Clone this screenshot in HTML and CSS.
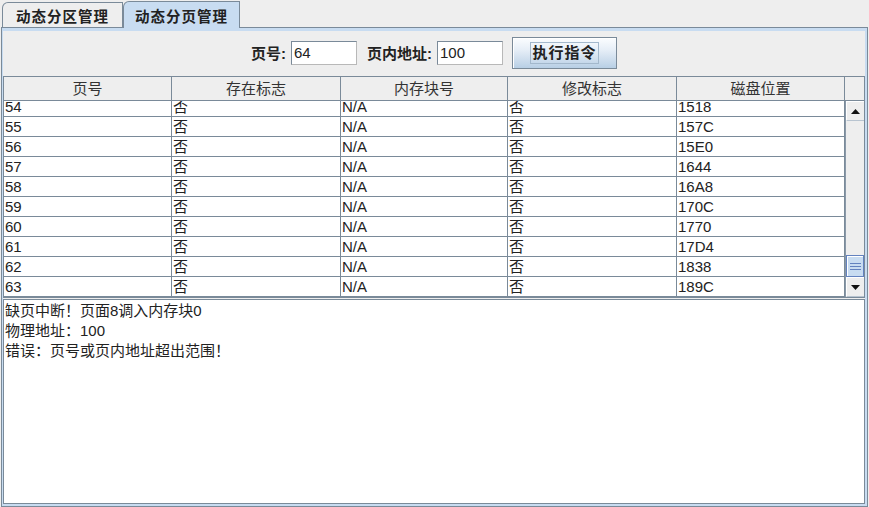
FILE: index.html
```html
<!DOCTYPE html>
<html lang="zh">
<head>
<meta charset="utf-8">
<title>动态分页管理</title>
<link rel="stylesheet" href="styles.css">
</head>
<body>
<div class="tabs">
  <div class="tab">动态分区管理</div>
  <div class="tab active">动态分页管理</div>
</div>
<div class="pane">
  <div class="pane-inner">
    <div class="toolbar">
      <span class="label">页号:</span>
      <div class="field f1">64</div>
      <span class="label">页内地址:</span>
      <div class="field f2">100</div>
      <div class="button"><span class="focus">执行指令</span></div>
    </div>
    <div class="table">
      <div class="thead">
        <div class="th c1">页号</div>
        <div class="th c2">存在标志</div>
        <div class="th c3">内存块号</div>
        <div class="th c4">修改标志</div>
        <div class="th c5">磁盘位置</div>
        <div class="th corner"></div>
      </div>
      <div class="tbody">
        <div class="rows">
          <div class="rows-inner">
            <div class="row"><div class="td c1">54</div><div class="td c2">否</div><div class="td c3">N/A</div><div class="td c4">否</div><div class="td c5">1518</div></div>
            <div class="row"><div class="td c1">55</div><div class="td c2">否</div><div class="td c3">N/A</div><div class="td c4">否</div><div class="td c5">157C</div></div>
            <div class="row"><div class="td c1">56</div><div class="td c2">否</div><div class="td c3">N/A</div><div class="td c4">否</div><div class="td c5">15E0</div></div>
            <div class="row"><div class="td c1">57</div><div class="td c2">否</div><div class="td c3">N/A</div><div class="td c4">否</div><div class="td c5">1644</div></div>
            <div class="row"><div class="td c1">58</div><div class="td c2">否</div><div class="td c3">N/A</div><div class="td c4">否</div><div class="td c5">16A8</div></div>
            <div class="row"><div class="td c1">59</div><div class="td c2">否</div><div class="td c3">N/A</div><div class="td c4">否</div><div class="td c5">170C</div></div>
            <div class="row"><div class="td c1">60</div><div class="td c2">否</div><div class="td c3">N/A</div><div class="td c4">否</div><div class="td c5">1770</div></div>
            <div class="row"><div class="td c1">61</div><div class="td c2">否</div><div class="td c3">N/A</div><div class="td c4">否</div><div class="td c5">17D4</div></div>
            <div class="row"><div class="td c1">62</div><div class="td c2">否</div><div class="td c3">N/A</div><div class="td c4">否</div><div class="td c5">1838</div></div>
            <div class="row"><div class="td c1">63</div><div class="td c2">否</div><div class="td c3">N/A</div><div class="td c4">否</div><div class="td c5">189C</div></div>
          </div>
        </div>
        <div class="vscroll">
          <div class="sbtn"><svg width="9" height="5" viewBox="0 0 9 5"><polygon points="0,5 4.5,0 9,5" fill="#111"/></svg></div>
          <div class="track"></div>
          <div class="thumb"><span></span><span></span><span></span></div>
          <div class="sbtn"><svg width="9" height="5" viewBox="0 0 9 5"><polygon points="0,0 9,0 4.5,5" fill="#111"/></svg></div>
        </div>
      </div>
    </div>
    <div class="output">
      <div class="line">缺页中断！页面8调入内存块0</div>
      <div class="line">物理地址：100</div>
      <div class="line">错误：页号或页内地址超出范围！</div>
    </div>
  </div>
</div>
</body>
</html>
```
FILE: styles.css
```css
* { box-sizing: border-box; }

body {
  margin: 0;
  width: 869px;
  height: 507px;
  overflow: hidden;
  background: #eeeeee;
  font-family: "Liberation Sans", "Noto Sans CJK SC", sans-serif;
  font-size: 15px;
  color: #222222;
}

/* tabs */
.tabs {
  display: flex;
  align-items: flex-end;
  height: 27px;
  padding-left: 2px;
}
.tab {
  width: 121px;
  height: 25px;
  border: 1px solid #7a8a99;
  border-bottom: none;
  border-top-left-radius: 6px;
  background: #eeeeee;
  font-size: 14.5px;
  font-weight: bold;
  letter-spacing: 1px;
  display: flex;
  align-items: center;
  justify-content: center;
  color: #222;
}
.tab.active {
  width: 117px;
  height: 27px;
  margin-bottom: -1px;
  position: relative;
  z-index: 1;
  background: #c8dcf1;
}

/* pane */
.pane {
  height: 480px;
  margin: 0 0 0 1px;
  width: 867px;
  border: 1px solid #7a8a99;
}
.pane-inner {
  height: 100%;
  border: 1px solid #c8dcf1;
  border-top-width: 3px;
  border-right-width: 2px;
  border-bottom-width: 2px;
  display: flex;
  flex-direction: column;
}

/* toolbar */
.toolbar {
  height: 45px;
  flex: none;
  display: flex;
  align-items: center;
  justify-content: center;
  padding-bottom: 2px;
}
.label {
  font-weight: bold;
  color: #222;
  margin-right: 5px;
}
.field {
  width: 66px;
  height: 24px;
  background: #fff;
  border: 1px solid;
  border-color: #7a8a99 #b8b8b8 #b8b8b8 #7a8a99;
  padding-left: 2px;
  line-height: 22px;
  margin-right: 10px;
}
.field.f2 { margin-right: 9px; }
.button {
  width: 105px;
  height: 32px;
  border: 1px solid #7a8a99;
  box-shadow: inset 1px 1px 0 #ffffff;
  background: linear-gradient(#fbfdff 0%, #e6eef7 40%, #b8cfe5 100%);
  display: flex;
  align-items: center;
  justify-content: center;
  margin-top: 1px;
}
.focus {
  border: 1px solid #a3b8cc;
  font-weight: bold;
  padding: 0 1px;
  line-height: 20px;
  letter-spacing: 1px;
}

/* table */
.table {
  height: 222px;
  flex: none;
  border: 1px solid #7a8a99;
  display: flex;
  flex-direction: column;
  background: #ffffff;
}
.thead {
  display: flex;
  height: 24px;
  flex: none;
  background: #eeeeee;
  border-bottom: 1px solid #7a8a99;
}
.th {
  border-right: 1px solid #7a8a99;
  text-align: center;
  line-height: 23px;
  color: #333;
}
.th.corner { width: 19px; border-right: none; }
.c1 { width: 168px; }
.c2 { width: 169px; }
.c3 { width: 167px; }
.c4 { width: 169px; }
.c5 { width: 168px; }

.tbody {
  display: flex;
  height: 196px;
}
.rows {
  width: 841px;
  height: 196px;
  overflow: hidden;
}
.rows-inner { margin-top: -4px; }
.row {
  display: flex;
  height: 20px;
  border-bottom: 1px solid #7a8a99;
}
.td {
  border-right: 1px solid #7a8a99;
  padding-left: 1px;
  line-height: 19px;
  white-space: nowrap;
  color: #222;
}

/* scrollbar */
.vscroll {
  width: 19px;
  display: flex;
  flex-direction: column;
  background: #eeeeee;
  border-left: 1px solid #8a99a8;
}
.sbtn {
  height: 20px;
  flex: none;
  display: flex;
  align-items: center;
  justify-content: center;
  border-top: 1px solid #ffffff;
  border-left: 1px solid #ffffff;
  border-bottom: 1px solid #b8c4d0;
  padding-right: 1px;
}
.track { flex: 1; }
.thumb {
  height: 22px;
  flex: none;
  background: #c8dcf1;
  border: 1px solid #6382bf;
  box-shadow: inset 1px 1px 0 #ffffff;
  display: flex;
  flex-direction: column;
  align-items: center;
  justify-content: center;
  gap: 2px;
}
.thumb span {
  display: block;
  width: 11px;
  height: 1px;
  background: #6382bf;
}

/* output */
.output {
  flex: 1;
  margin-top: 1px;
  background: #ffffff;
  border: 1px solid #7a8a99;
  padding: 1px 1px;
}
.line {
  line-height: 20px;
  color: #222;
}
```
